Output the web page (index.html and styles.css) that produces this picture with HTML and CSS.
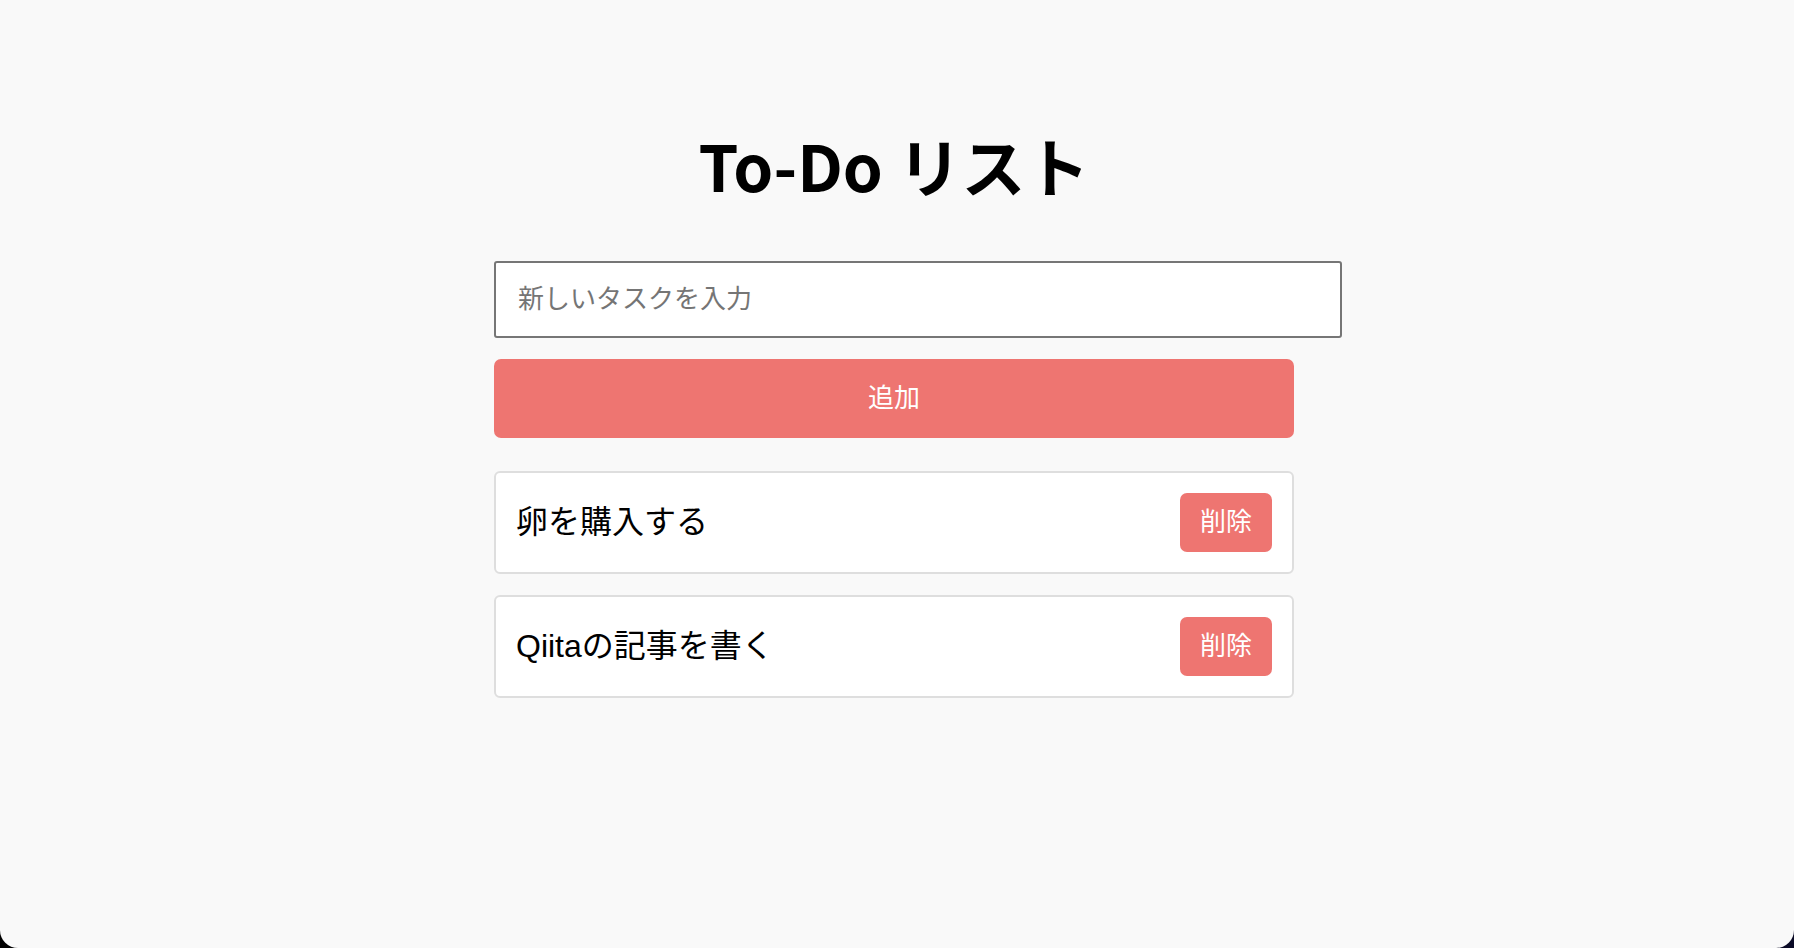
FILE: index.html
```html
<!DOCTYPE html>
<html lang="ja">
<head>
    <meta charset="utf-8">
    <title>To-Do リスト</title>
    <link rel="stylesheet" href="styles.css">
</head>
<body>
    <div class="container">
        <h1 class="title">To-Do リスト</h1>
        <form id="todo-form" class="todo-form">
            <input type="text" id="todo-input" class="todo-input" placeholder="新しいタスクを入力">
            <button type="submit" class="add-button">追加</button>
        </form>
        <ul class="todo-list" id="todo-list">
            <li class="todo-item">
                <span class="todo-text">卵を購入する</span>
                <button class="delete-button">削除</button>
            </li>
            <li class="todo-item">
                <span class="todo-text">Qiitaの記事を書く</span>
                <button class="delete-button">削除</button>
            </li>
        </ul>
    </div>

    <script>
        const todoForm = document.getElementById('todo-form');
        const todoInput = document.getElementById('todo-input');
        const todoList = document.getElementById('todo-list');

        todoForm.addEventListener('submit', (event) => {
            event.preventDefault();
            const text = todoInput.value.trim();
            if (text === '') return;
            const item = document.createElement('li');
            item.className = 'todo-item';
            item.innerHTML = `
                <span class="todo-text"></span>
                <button class="delete-button">削除</button>
            `;
            item.querySelector('.todo-text').textContent = text;
            todoList.appendChild(item);
            todoInput.value = '';
        });

        // 削除ボタン
        todoList.addEventListener('click', (event) => {
            if (event.target.classList.contains('delete-button')) {
                event.target.closest('.todo-item').remove();
            }
        });
    </script>
</body>
</html>
```

FILE: styles.css
```css
html {
    background: linear-gradient(to right, #000, #0a0a26);
}

body {
    font-family: "Liberation Sans", "Noto Sans CJK JP", sans-serif;
    background-color: #f9f9f9;
    margin: 0;
    padding: 0 6px 0 0;
    min-height: 948px;
    box-sizing: border-box;
    border-radius: 0 0 18px 18px;
}

.container {
    width: 800px;
    margin: 0 auto;
    padding-top: 126px;
}

.title {
    font-family: "Noto Sans CJK JP", sans-serif;
    font-size: 64px;
    font-weight: bold;
    line-height: 1.2;
    text-align: center;
    color: #000;
    margin: 0 0 58px;
}

.todo-form {
    margin: 0;
}

.todo-input {
    display: block;
    width: 100%;
    height: 29px;
    padding: 22px;
    font-family: "Liberation Sans", "Noto Sans CJK JP", sans-serif;
    font-size: 26px;
    border: 2px solid #767676;
    border-radius: 3px;
    background-color: #fff;
    color: #000;
    outline: none;
}

.todo-input::placeholder {
    color: #757575;
}

.add-button {
    display: block;
    width: 100%;
    margin-top: 21px;
    padding: 20px 0;
    font-family: "Liberation Sans", "Noto Sans CJK JP", sans-serif;
    font-size: 26px;
    line-height: 39px;
    background-color: #ee7571;
    color: #fff;
    border: none;
    border-radius: 7px;
    cursor: pointer;
}

.todo-list {
    list-style: none;
    margin: 33px 0 0;
    padding: 0;
}

.todo-item {
    display: flex;
    justify-content: space-between;
    align-items: center;
    padding: 20px;
    margin-bottom: 21px;
    background-color: #fff;
    border: 2px solid #dedede;
    border-radius: 6px;
}

.todo-text {
    font-size: 32px;
    line-height: 40px;
    color: #000;
}

.delete-button {
    padding: 11px 20px;
    font-family: "Liberation Sans", "Noto Sans CJK JP", sans-serif;
    font-size: 26px;
    line-height: 37px;
    background-color: #ee7571;
    color: #fff;
    border: none;
    border-radius: 7px;
    cursor: pointer;
}
```
